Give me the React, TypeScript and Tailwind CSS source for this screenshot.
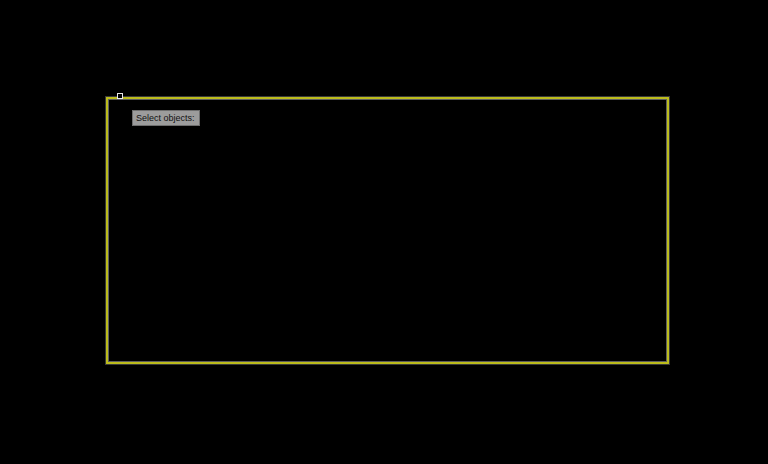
export default function App() {
  return (
    <div className="w-[768px] h-[464px] bg-black overflow-hidden pt-[97px] pl-[106px] font-['Liberation_Sans',sans-serif]">
      <div className="relative w-[563px] h-[267px] border-2 border-[#bcbc1c] shadow-[inset_0_0_0_1px_#5e5e5e,0_0_0_1px_#3a3a3a]">
        {/* grip */}
        <span className="absolute left-[9px] -top-[6px] w-[6px] h-[6px] border border-[#e8e8e8] bg-black" />
        {/* prompt tooltip */}
        <div className="absolute left-[24px] top-[11px] h-[16px] w-[68px] bg-[#9c9c9c] border border-[#6e6e6e] flex items-center px-[3px] text-[9px] leading-none text-[#111]">
          Select objects:
        </div>
      </div>
    </div>
  );
}
